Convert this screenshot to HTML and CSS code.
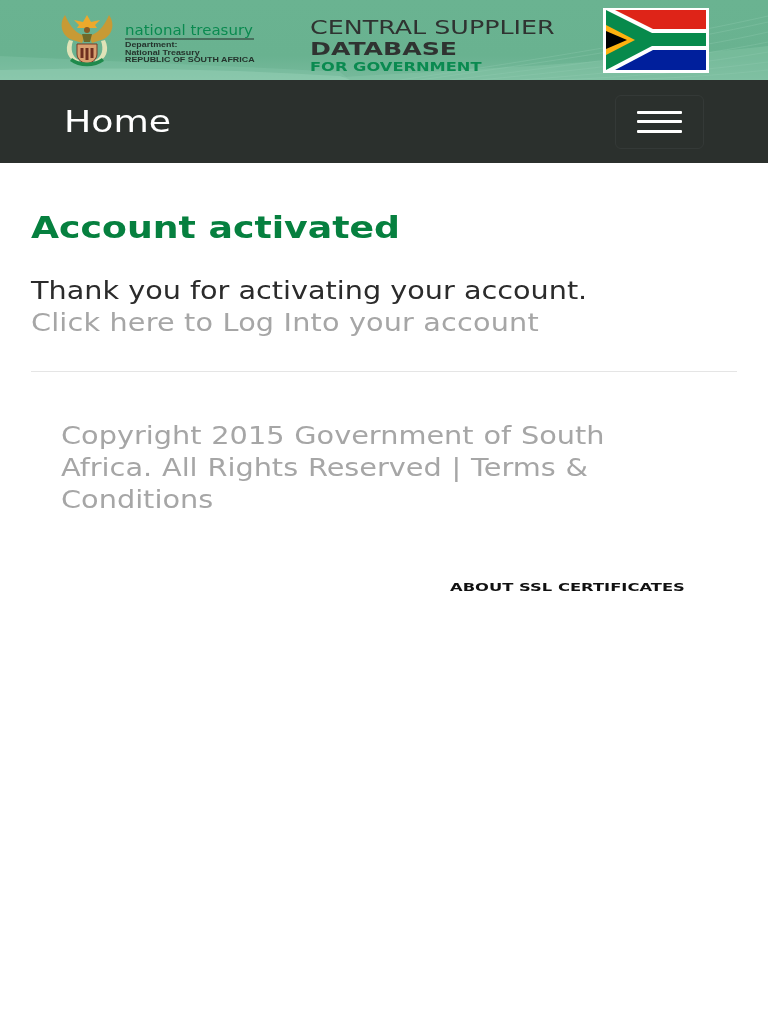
FILE: index.html
```html
<!DOCTYPE html>
<html lang="en">
<head>
<meta charset="utf-8">
<title>Account activated</title>
<link rel="stylesheet" href="styles.css">
</head>
<body>
<header class="banner">
  <svg class="banner-waves" viewBox="0 0 768 80" preserveAspectRatio="none" aria-hidden="true">
    <path d="M0 56 C120 62 240 66 340 72 L350 80 H0Z" fill="#8ccaae" opacity=".3"/>
    <path d="M0 70 C120 66 240 70 340 76 L350 80 H0Z" fill="#9ed4bb" opacity=".4"/>
    <g fill="none" stroke="#a6d8c1" stroke-width="1" opacity=".22">
      <path d="M420 80 C560 60 680 42 768 22"/>
      <path d="M400 80 C550 58 680 36 768 16"/>
      <path d="M450 80 C580 64 690 50 768 32"/>
      <path d="M480 80 C600 68 700 56 768 42"/>
      <path d="M520 80 C630 72 710 62 768 52"/>
      <path d="M560 80 C650 76 720 68 768 62"/>
      <path d="M620 80 C680 78 730 74 768 70"/>
    </g>
    <path d="M330 78 C450 70 600 64 768 46 V80 H330Z" fill="#8fcbb0" opacity=".35"/>
  </svg>
  <div class="crest">
    <svg width="52" height="54" viewBox="0 0 52 54" aria-hidden="true">
      <path d="M4 1 C-2 9 0 20 9 25 L21 29 L24 22 C16 20 9 13 4 1Z" fill="#c79a35"/>
      <path d="M48 1 C54 9 52 20 43 25 L31 29 L28 22 C36 20 43 13 48 1Z" fill="#c79a35"/>
      <path d="M13 6 L22 8 L26 1 L30 8 L39 6 L34 11 L36 14 H16 L18 11Z" fill="#eda92c"/>
      <circle cx="26" cy="16" r="3" fill="#8a5a22"/>
      <path d="M21 20 H31 L29 28 H23Z" fill="#6e6a2a"/>
      <path d="M8 26 C3 36 7 46 17 49 L18 46 C11 43 9 35 12 27Z" fill="#dfe3b8"/>
      <path d="M44 26 C49 36 45 46 35 49 L34 46 C41 43 43 35 40 27Z" fill="#dfe3b8"/>
      <path d="M16 30 H36 V40 C36 46 30 49 26 50 C22 49 16 46 16 40Z" fill="#d9a070" stroke="#7a3b25" stroke-width="1"/>
      <path d="M21 34 V44 M26 34 V46 M31 34 V44" stroke="#6f2f20" stroke-width="3"/>
      <path d="M9 47 C18 54 34 54 43 47 L41 44 C33 50 19 50 11 44Z" fill="#1f8a4c"/>
    </svg>
  </div>
  <div class="dept">
    <div class="dept-name">national treasury</div>
    <div class="dept-line"></div>
    <div class="dept-text">Department:</div>
    <div class="dept-text">National Treasury</div>
    <div class="dept-text">REPUBLIC OF SOUTH AFRICA</div>
  </div>
  <div class="csd">
    <div class="csd-top">CENTRAL SUPPLIER</div>
    <div class="csd-mid">DATABASE</div>
    <div class="csd-low">FOR GOVERNMENT</div>
  </div>
  <svg class="flag" width="106" height="65" viewBox="0 0 106 65" aria-hidden="true">
    <rect width="106" height="65" fill="#fff"/>
    <path d="M12 2 H103 V21 H50Z" fill="#de2418"/>
    <path d="M12 62 H103 V42 H50Z" fill="#001f9c"/>
    <path d="M3 2 L49 25 H103 V38 H49 L3 62Z" fill="#078a4c"/>
    <path d="M3 17 L32 32 L3 47Z" fill="#ffb20f"/>
    <path d="M3 23 L24 32 L3 41Z" fill="#000"/>
  </svg>
</header>
<nav class="navbar">
  <a class="brand" href="#">Home</a>
  <button class="toggler" type="button" aria-label="Menu">
    <span class="bar"></span><span class="bar"></span><span class="bar"></span>
  </button>
</nav>
<main class="content">
  <h1 class="title">Account activated</h1>
  <p class="message">Thank you for activating your account.<br><a class="link" href="#">Click here to Log Into your account</a></p>
  <hr class="rule">
  <p class="copyright">Copyright 2015 Government of South Africa. All Rights Reserved | Terms &amp; Conditions</p>
  <div class="ssl"><a class="ssl-link" href="#">ABOUT SSL CERTIFICATES</a></div>
</main>
</body>
</html>
```
FILE: styles.css
```css
* { box-sizing: border-box; }
html, body { margin: 0; padding: 0; background: #fff; }
body { font-family: "DejaVu Sans", Verdana, sans-serif; color: #2b2b2b; }

.banner {
  position: relative;
  height: 80px;
  display: flex;
  align-items: flex-start;
  overflow: hidden;
  background: linear-gradient(180deg, #6ab391 0%, #69b290 70%, #78ba9c 100%);
}
.banner-waves { position: absolute; inset: 0; width: 100%; height: 100%; }
.crest { position: relative; margin: 14px 0 0 61px; width: 52px; height: 54px; filter: blur(.4px); }
.dept { position: relative; margin: 22px 0 0 12px; width: 129px; filter: blur(.3px); }
.dept-name {
  width: fit-content;
  font-size: 13.500px;
  line-height: 16px;
  color: #0a8a50;
  white-space: nowrap;
  transform: scaleX(1.11);
  transform-origin: 0 0;
}
.dept-line { height: 2px; margin-bottom: 1px; background: #47705d; }
.dept-text {
  width: fit-content;
  font-family: "Liberation Sans", sans-serif;
  font-size: 7px;
  line-height: 7.500px;
  font-weight: 700;
  color: #24332c;
  white-space: nowrap;
  transform: scaleX(1.27);
  transform-origin: 0 0;
}
.csd { position: relative; margin: 17px 0 0 56px; width: 250px; filter: blur(.3px); }
.csd-top, .csd-mid, .csd-low { width: fit-content; white-space: nowrap; transform-origin: 0 0; }
.csd-top { font-size: 19.500px; line-height: 21px; color: #2f3331; transform: scaleX(1.3); }
.csd-mid { font-size: 18.500px; line-height: 21px; font-weight: 700; color: #2f3331; transform: scaleX(1.36); }
.csd-low { font-size: 12.500px; line-height: 15px; font-weight: 700; color: #0a8a50; transform: scaleX(1.3); }
.flag { position: relative; flex: none; margin: 8px 0 0 43px; }

.navbar {
  height: 83px;
  background: #2b302d;
  display: flex;
  align-items: center;
  justify-content: space-between;
  padding: 0 64px;
}
.brand {
  display: block;
  margin-top: -2px;
  color: #fff;
  font-size: 31px;
  line-height: 40px;
  text-decoration: none;
  transform: scaleX(1.17);
  transform-origin: 0 0;
  filter: blur(.25px);
}
.toggler {
  width: 89px;
  height: 54px;
  background: transparent;
  border: 1px solid #343937;
  border-radius: 6px;
  display: flex;
  flex-direction: column;
  align-items: center;
  justify-content: center;
  gap: 6.500px;
  padding: 0;
}
.bar { display: block; width: 45px; height: 3px; background: #fff; border-radius: 1px; }

.content { padding: 46px 31px 0; filter: blur(.25px); }
.title, .message, .copyright, .ssl-link { transform-origin: 0 0; }
.title {
  width: fit-content;
  margin: 0;
  font-size: 31px;
  line-height: 36px;
  font-weight: 700;
  color: #06803f;
  transform: scaleX(1.169);
}
.message {
  width: fit-content;
  margin: 30px 0 0;
  font-size: 25px;
  line-height: 32px;
  color: #2b2b2b;
  transform: scaleX(1.147);
}
.link { color: #a6a6a6; text-decoration: none; letter-spacing: .15px; }
.rule { margin: 32px 0 0; border: 0; border-top: 1px solid #e5e5e5; }
.copyright {
  width: 500px;
  margin: 48px 0 0 30px;
  font-size: 25px;
  line-height: 32px;
  color: #a6a6a6;
  word-spacing: .6px;
  transform: scaleX(1.15);
}
.ssl { margin-top: 64px; display: flex; justify-content: flex-start; padding-left: 419px; }
.ssl-link {
  display: block;
  font-size: 11px;
  line-height: 16px;
  font-weight: 700;
  color: #111;
  text-decoration: none;
  white-space: nowrap;
  transform: scaleX(1.485);
}
```
